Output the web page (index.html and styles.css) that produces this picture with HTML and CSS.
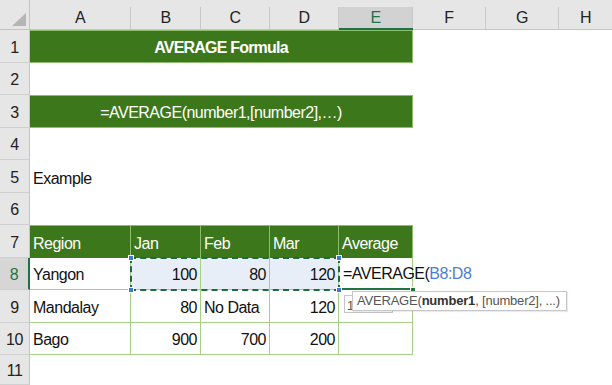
FILE: index.html
```html
<!DOCTYPE html>
<html lang="en">
    <head>
        <meta charset="utf-8" />
        <title>AVERAGE Formula</title>
        <link rel="stylesheet" href="styles.css">
    </head>
    <body>
        <div id="sheet">
            <!-- column headers -->
            <div class="corner"><span class="tri"></span></div>
            <div class="colhead"><span>A</span></div>
            <div class="colhead"><span>B</span></div>
            <div class="colhead"><span>C</span></div>
            <div class="colhead"><span>D</span></div>
            <div class="colhead active"><span>E</span></div>
            <div class="colhead"><span>F</span></div>
            <div class="colhead"><span>G</span></div>
            <div class="colhead last"><span>H</span></div>

            <!-- row 1 -->
            <div class="rowhead">1</div>
            <div class="cell banner bold">AVERAGE Formula</div>
            <div class="cell"></div><div class="cell"></div><div class="cell"></div>

            <!-- row 2 -->
            <div class="rowhead">2</div>
            <div class="cell"></div><div class="cell"></div><div class="cell"></div><div class="cell"></div><div class="cell"></div><div class="cell"></div><div class="cell"></div><div class="cell"></div>

            <!-- row 3 -->
            <div class="rowhead">3</div>
            <div class="cell banner">=AVERAGE(number1,[number2],…)</div>
            <div class="cell"></div><div class="cell"></div><div class="cell"></div>

            <!-- row 4 -->
            <div class="rowhead">4</div>
            <div class="cell"></div><div class="cell"></div><div class="cell"></div><div class="cell"></div><div class="cell"></div><div class="cell"></div><div class="cell"></div><div class="cell"></div>

            <!-- row 5 -->
            <div class="rowhead">5</div>
            <div class="cell">Example</div><div class="cell"></div><div class="cell"></div><div class="cell"></div><div class="cell"></div><div class="cell"></div><div class="cell"></div><div class="cell"></div>

            <!-- row 6 -->
            <div class="rowhead">6</div>
            <div class="cell"></div><div class="cell"></div><div class="cell"></div><div class="cell"></div><div class="cell"></div><div class="cell"></div><div class="cell"></div><div class="cell"></div>

            <!-- row 7: table header -->
            <div class="rowhead">7</div>
            <div class="cell th first">Region</div>
            <div class="cell th">Jan</div>
            <div class="cell th">Feb</div>
            <div class="cell th">Mar</div>
            <div class="cell th">Average</div>
            <div class="cell"></div><div class="cell"></div><div class="cell"></div>

            <!-- row 8 -->
            <div class="rowhead active">8</div>
            <div class="cell td first">Yangon</div>
            <div class="cell td num sel anchor">100
                <!-- copy marquee around B8:D8 -->
                <div class="marquee">
                    <i class="handle tl"></i>
                    <i class="handle bl"></i>
                    <i class="handle tr"></i>
                    <i class="handle br"></i>
                </div>
            </div>
            <div class="cell td num sel">80</div>
            <div class="cell td num sel">120</div>
            <div class="cell td editing">=AVERAGE(<span class="ref">B8:D8</span></div>
            <div class="cell"></div><div class="cell"></div><div class="cell"></div>

            <!-- row 9 -->
            <div class="rowhead">9</div>
            <div class="cell td first">Mandalay</div>
            <div class="cell td num">80</div>
            <div class="cell td">No Data</div>
            <div class="cell td num">120</div>
            <div class="cell td"></div>
            <div class="cell"></div><div class="cell"></div><div class="cell"></div>

            <!-- row 10 -->
            <div class="rowhead">10</div>
            <div class="cell td first">Bago</div>
            <div class="cell td num">900</div>
            <div class="cell td num">700</div>
            <div class="cell td num">200</div>
            <div class="cell td"></div>
            <div class="cell"></div><div class="cell"></div><div class="cell"></div>

            <!-- row 11 -->
            <div class="rowhead">11</div>
            <div class="cell"></div><div class="cell"></div><div class="cell"></div><div class="cell"></div><div class="cell"></div><div class="cell"></div><div class="cell"></div><div class="cell"></div>

            <i class="fill-handle"></i>

            <!-- autocomplete box + function tooltip -->
            <div class="autobox">1</div>
            <div class="tooltip">AVERAGE(<b>number1</b>, [number2], ...)</div>
        </div>
    </body>
</html>
```

FILE: styles.css
```css
* {
    margin: 0;
    padding: 0;
    box-sizing: border-box;
}

body {
    width: 612px;
    height: 385px;
    overflow: hidden;
    background: #fff;
    font-family: "Liberation Sans", Arial, sans-serif;
    font-size: 16px;
    letter-spacing: -0.5px;
    color: #111;
}

#sheet {
    position: relative;
    display: grid;
    grid-template-columns: 30px 101px 70px 69px 69px 74px 73px 73px 1fr;
    grid-template-rows: 30px 33px 32px 33px 32px 33px 32px 33px 32px 33px 32px 30px;
    height: 385px;
}

/* headers */
.corner,
.colhead {
    background: #e6e6e6;
    display: flex;
    align-items: flex-end;
    border-bottom: 1px solid #c4c4c4;
}

.corner {
    border-right: 1px solid #c4c4c4;
    justify-content: flex-end;
    padding: 0 3px 3px 0;
}

.corner .tri {
    width: 0;
    height: 0;
    border-left: 14px solid transparent;
    border-bottom: 13px solid #b5b5b5;
}

.colhead span {
    flex: 1;
    height: 22px;
    line-height: 22px;
    text-align: center;
    border-right: 1px solid #c9c9c9;
    color: #222;
}

.colhead.last span {
    border-right: 0;
}

.colhead.active {
    border-bottom: 2px solid #217346;
}

.colhead.active span {
    background: #d2d2d2;
    color: #217346;
    height: 21px;
    line-height: 21px;
}

.rowhead {
    background: #e6e6e6;
    border-right: 1px solid #c4c4c4;
    border-bottom: 1px solid #d0d0d0;
    display: flex;
    align-items: center;
    justify-content: center;
    padding-top: 3px;
    color: #222;
}

.rowhead.active {
    background: #d6d6d6;
    color: #217346;
    border-right: 2px solid #217346;
}

/* cells */
.cell {
    display: flex;
    align-items: flex-end;
    padding: 0 3px 5px 3px;
    white-space: nowrap;
}

.banner {
    grid-column: span 5;
    background: #3d771b;
    color: #fff;
    justify-content: center;
    border: 1px solid #8cbd6c;
    border-left: 0;
}

.bold {
    font-weight: bold;
    letter-spacing: -0.8px;
}

.th {
    background: #3d771b;
    color: #fff;
    border-right: 1px solid #8cbd6c;
    border-top: 1px solid #8cbd6c;
}

.td {
    border-right: 1px solid #a6cf88;
    border-bottom: 1px solid #a6cf88;
}

.num {
    justify-content: flex-end;
}

.sel {
    background: #e8eef8;
}

.anchor {
    position: relative;
}

.editing {
    position: relative;
    z-index: 2;
    padding-left: 4px;
    border-bottom: 2px solid #217346;
}

.editing .ref {
    color: #4a7fd6;
}

/* copy marquee */
.marquee {
    position: absolute;
    left: -1px;
    top: -1px;
    width: 210px;
    height: 34px;
    border: 2px dashed #1e6b3c;
    pointer-events: none;
    z-index: 3;
}

.handle {
    position: absolute;
    width: 6px;
    height: 6px;
    background: #3c78d8;
    border: 1px solid #fff;
}

.handle.tl { left: -4px; top: -4px; }
.handle.bl { left: -4px; bottom: -4px; }
.handle.tr { right: -4px; top: -4px; }
.handle.br { right: -4px; bottom: -4px; }

.fill-handle {
    position: absolute;
    left: 410px;
    top: 287px;
    width: 6px;
    height: 6px;
    background: #217346;
    border: 1px solid #fff;
    z-index: 4;
}

/* autocomplete remnant and tooltip */
.autobox {
    position: absolute;
    left: 344px;
    top: 295px;
    width: 49px;
    height: 18px;
    background: #fff;
    border: 1px solid #c6c6c6;
    font-size: 13px;
    padding: 2px 0 0 2px;
    color: #555;
    z-index: 5;
}

.tooltip {
    position: absolute;
    left: 352px;
    top: 291px;
    width: 215px;
    height: 20px;
    background: #fff;
    border: 1px solid #c6c6c6;
    box-shadow: 1px 1px 1px rgba(0, 0, 0, 0.08);
    font-size: 13px;
    letter-spacing: -0.2px;
    line-height: 18px;
    padding-left: 4px;
    color: #555;
    white-space: nowrap;
    z-index: 6;
}

.tooltip b {
    color: #333;
}
```
